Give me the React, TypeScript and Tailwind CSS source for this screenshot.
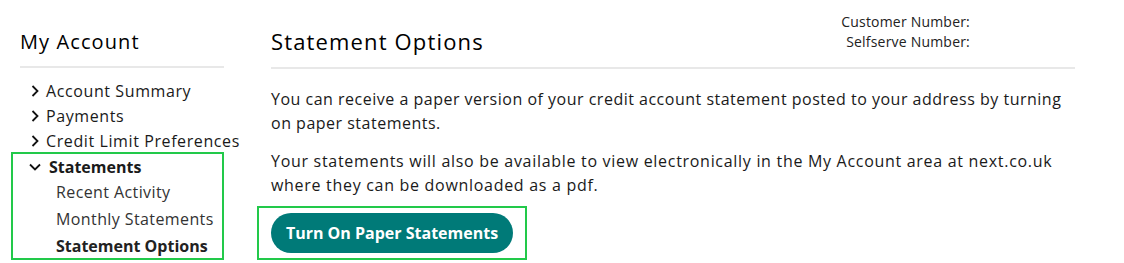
import React from "react";

const Right = () => (
  <svg width="8" height="12" viewBox="0 0 8 12" className="shrink-0">
    <path d="M1.5 1 L6.5 6 L1.5 11" fill="none" stroke="#111" strokeWidth="1.8" />
  </svg>
);

const Down = () => (
  <svg width="12" height="8" viewBox="0 0 12 8" className="shrink-0">
    <path d="M1 1.5 L6 6.5 L11 1.5" fill="none" stroke="#111" strokeWidth="1.8" />
  </svg>
);

export default function App() {
  return (
    <div
      className="flex w-[1124px] h-[263px] bg-white text-[#1a1a1a] overflow-hidden"
      style={{ fontFamily: '"Open Sans", "Liberation Sans", sans-serif' }}
    >
      <aside className="ml-[20px] w-[204px] shrink-0">
        <div className="pt-[29px] h-[66px] text-[20px] leading-[26px] tracking-[1.1px] text-black">My Account</div>
        <div className="h-[2px] bg-[#e8e8e8]" />
        <ul className="mt-[10px] text-[16px] tracking-[0.6px]">
          {["Account Summary", "Payments", "Credit Limit Preferences"].map((t) => (
            <li key={t} className="flex items-center h-[25px] pl-[11px] gap-[7px] whitespace-nowrap">
              <Right />
              <span>{t}</span>
            </li>
          ))}
        </ul>
        <div className="ml-[-9px] w-[213px] border-2 border-[#22c94a] mt-[-1px] h-[108px]">
          <div className="flex items-center h-[25px] pl-[16px] gap-[8px] font-bold text-[16px]">
            <Down />
            <span>Statements</span>
          </div>
          <ul className="pl-[43px] text-[16px] text-[#333]">
            <li className="h-[27px] leading-[27px] tracking-[0.4px]">Recent Activity</li>
            <li className="h-[27px] leading-[27px] tracking-[0.4px]">Monthly Statements</li>
            <li className="h-[27px] leading-[27px] font-bold text-[#222]">Statement Options</li>
          </ul>
        </div>
      </aside>
      <main className="ml-[47px] w-[804px] shrink-0">
        <div className="flex justify-between h-[67px]">
          <h1 className="pt-[26px] text-[22px] leading-[30px] tracking-[1.15px] text-black">Statement Options</h1>
          <div className="pt-[12px] mr-[105px] text-right text-[14px] leading-[20px] tracking-[0.2px] text-[#222]">
            <div>Customer Number:</div>
            <div>Selfserve Number:</div>
          </div>
        </div>
        <div className="h-[2px] bg-[#e8e8e8]" />
        <p className="mt-[18px] text-[16px] leading-[24px] tracking-[0.5px] whitespace-nowrap">
          You can receive a paper version of your credit account statement posted to your address by turning
          <br />
          on paper statements.
        </p>
        <p className="mt-[14px] text-[16px] leading-[24px] tracking-[0.7px] whitespace-nowrap">
          Your statements will also be available to view electronically in the My Account area at next.co.uk
          <br />
          where they can be downloaded as a pdf.
        </p>
        <div className="mt-[9px] ml-[-14px] inline-block border-2 border-[#22c94a] px-[12px] py-[5px]">
          <button className="h-[40px] w-[242px] rounded-full bg-[#007a78] text-white font-bold text-[16px]">
            Turn On Paper Statements
          </button>
        </div>
      </main>
    </div>
  );
}
